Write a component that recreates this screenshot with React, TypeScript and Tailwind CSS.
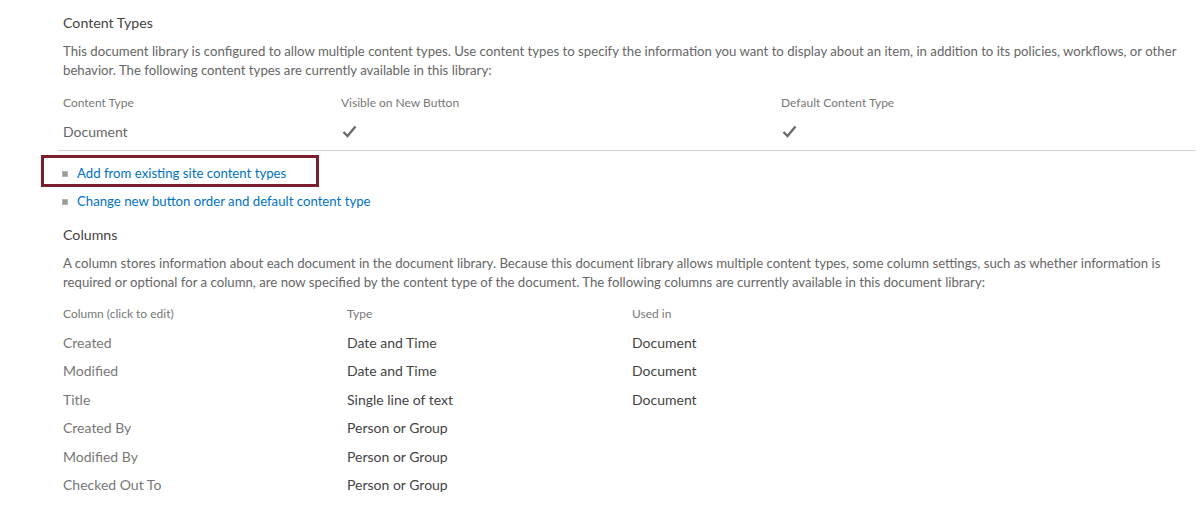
import type * as React from "react";

const font = { fontFamily: "Lato, 'Liberation Sans', sans-serif" };

function Check() {
  return (
    <svg width="15" height="13" viewBox="0 0 15 13" className="block">
      <path d="M1.5 7 L5.5 11 L13.5 1.5" fill="none" stroke="#6b6b6b" strokeWidth="2.4" />
    </svg>
  );
}

function Bullet() {
  return <span className="block h-[6px] w-[6px] border border-[#b5b5b5] bg-[#9a9a9a]" />;
}

const columns: [string, string, string][] = [
  ["Created", "Date and Time", "Document"],
  ["Modified", "Date and Time", "Document"],
  ["Title", "Single line of text", "Document"],
  ["Created By", "Person or Group", ""],
  ["Modified By", "Person or Group", ""],
  ["Checked Out To", "Person or Group", ""],
];

export default function App(): React.JSX.Element {
  return (
    <div className="h-[508px] w-[1200px] overflow-hidden bg-white pl-[58px] pr-[4px] pt-[13px]" style={font}>
      <div className="pl-[5px]">
        <h2 className="h-[20px] text-[14.2px] leading-[20px] text-[#444]">Content Types</h2>
        <p className="mt-[8.5px] text-[13.2px] leading-[19px] text-[#666]">
          This document library is configured to allow multiple content types. Use content types to specify the information you want to display about an item, in addition to its policies, workflows, or other
          <br />
          behavior. The following content types are currently available in this library:
        </p>
      </div>

      <div className="mt-[9.5px] border-b border-[#d4d4d4] pb-[5px] pl-[5px]">
        <div className="grid h-[28px] grid-cols-[278px_440px_1fr] items-center text-[12px] text-[#777]">
          <span>Content Type</span>
          <span>Visible on New Button</span>
          <span>Default Content Type</span>
        </div>
        <div className="grid h-[28px] grid-cols-[278px_440px_1fr] items-center text-[14px] text-[#666]">
          <span>Document</span>
          <span className="pl-[1px]"><Check /></span>
          <span className="pl-[1px]"><Check /></span>
        </div>
      </div>

      <div className="mt-[8px] pl-[4px]">
        <div className="relative flex h-[28px] items-center gap-[9px] pt-[1px]">
          <Bullet />
          <a className="text-[13.2px] text-[#0072c6]" href="#">Add from existing site content types</a>
          <div className="pointer-events-none absolute left-[-21px] top-[-4px] h-[32px] w-[278px] border-[3px] border-[#7b1f2e]" />
        </div>
        <div className="flex h-[29px] items-center gap-[9px] pt-[1px]">
          <Bullet />
          <a className="text-[13.2px] text-[#0072c6]" href="#">Change new button order and default content type</a>
        </div>
      </div>

      <div className="mt-[9px] pl-[5px]">
        <h2 className="h-[20px] text-[14.2px] leading-[20px] text-[#444]">Columns</h2>
        <p className="mt-[8.5px] text-[13.2px] leading-[19px] text-[#666]">
          A column stores information about each document in the document library. Because this document library allows multiple content types, some column settings, such as whether information is
          <br />
          required or optional for a column, are now specified by the content type of the document. The following columns are currently available in this document library:
        </p>

        <div className="mt-[8.5px] grid h-[28px] grid-cols-[284px_285px_1fr] items-center text-[12px] text-[#777]">
          <span>Column (click to edit)</span>
          <span>Type</span>
          <span>Used in</span>
        </div>
        {columns.map(([name, type, used]) => (
          <div key={name} className="grid h-[28.5px] grid-cols-[284px_285px_1fr] items-center text-[14px]">
            <span className="text-[#777]">{name}</span>
            <span className="text-[#444]">{type}</span>
            <span className="text-[#444]">{used}</span>
          </div>
        ))}
      </div>
    </div>
  );
}
